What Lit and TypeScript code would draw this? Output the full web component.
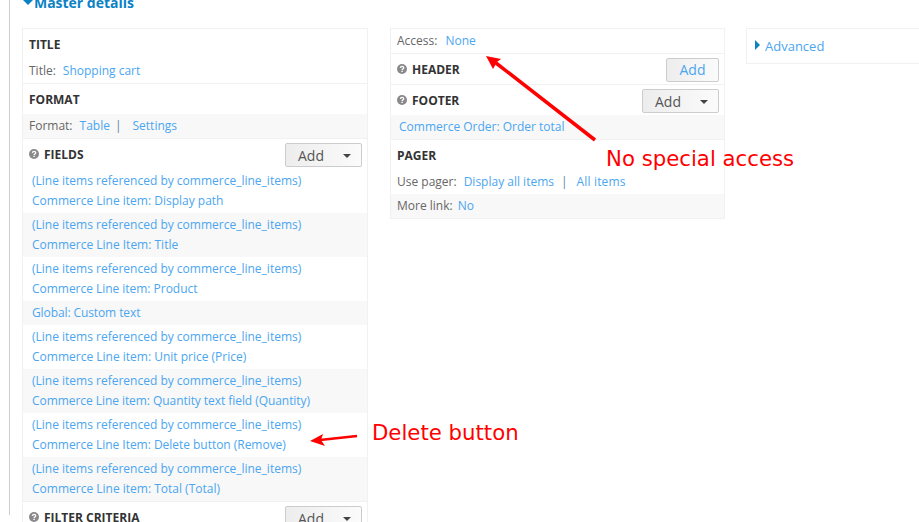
import { LitElement, html, css, svg } from "lit";
import { customElement } from "lit/decorators.js";

const help = html`<svg class="help" viewBox="0 0 10 10" width="10" height="10"><circle cx="5" cy="5" r="5" fill="#8a8a8a"/><path d="M3.4 3.9C3.500 2.900 4.100 2.400 5.100 2.400C6.100 2.400 6.700 2.900 6.700 3.700C6.700 4.900 5.100 4.900 5.100 6" fill="none" stroke="#fff" stroke-width="1.300"/><rect x="4.400" y="6.700" width="1.400" height="1.300" fill="#fff"/></svg>`;
const addDrop = html`<span class="btn drop">Add<i class="caret"></i></span>`;

const L = "(Line items referenced by commerce_line_items)";
/* last value: per-line tracking, to follow the reference's rendered text widths */
const fields: [string | null, string, number][] = [
  [L, "Commerce Line item: Display path", 0],
  [L, "Commerce Line Item: Title", 0],
  [L, "Commerce Line item: Product", -0.03],
  [null, "Global: Custom text", -0.1],
  [L, "Commerce Line item: Unit price (Price)", 0],
  [L, "Commerce Line item: Quantity text field (Quantity)", -0.06],
  [L, "Commerce Line Item: Delete button (Remove)", -0.03],
  [L, "Commerce Line item: Total (Total)", 0],
];

@customElement("app-root")
export class AppRoot extends LitElement {
  static styles = css`
    :host { display: block; position: relative; width: 919px; height: 522px; overflow: hidden; background: #fff;
      font-family: "Open Sans", sans-serif; font-size: 12px; color: #666; }
    .page { margin-left: 9px; border-left: 1px solid #ccc; height: 522px; padding-left: 12px; }
    .legend { height: 28px; margin-top: -7px; padding-left: 1px; display: flex; align-items: flex-start;
      font-size: 14px; font-weight: 700; color: #0a82c4; line-height: 19px; letter-spacing: -0.02px; }
    .legend-arrow { width: 0; height: 0; border-left: 5px solid transparent; border-right: 5px solid transparent; border-top: 5px solid #0a82c4; margin: 7px 1px 0 0; }
    .cols { display: flex; align-items: flex-start; margin-top: 7px; }
    .col { border: 1px solid #f1f1f1; box-sizing: border-box; }
    .c1 { width: 346px; flex: none; }
    .c2 { width: 335px; flex: none; margin-left: 22px; }
    .c3 { flex: 1; margin-left: 21px; height: 36px; border-right: 0; display: flex; align-items: center; padding-left: 8px; gap: 5px; color: #4ba6f0; font-size: 13px; }
    .right-arrow { width: 0; height: 0; border-top: 5px solid transparent; border-bottom: 5px solid transparent; border-left: 5px solid #0a82c4; margin-top: -2px; }
    a { color: #4ba6f0; text-decoration: none; }
    .head { display: flex; align-items: center; font-weight: 700; color: #333; padding: 0 5px 0 6px; height: 30px; }
    .help { margin-right: 5px; flex: none; }
    .spacer { flex: 1; }
    .row { padding: 0 6px; line-height: 24px; height: 24px; white-space: nowrap; }
    .line { border-bottom: 1px solid #f1f1f1; }
    .top { border-top: 1px solid #f1f1f1; }
    .alt { background: #f8f8f8; }
    .gap { margin-left: 7px; }
    .gap-wide { margin-left: 8px; }
    .gap-narrow { margin-left: 5px; }
    .gap2 { margin-left: 11px; }
    .gap2-narrow { margin-left: 9px; letter-spacing: 0.15px; }
    .sep { margin-left: 5px; color: #5a7fa8; }
    .sep-wide { margin-left: 7px; }
    .inset { padding-left: 8px; }
    .field { padding: 2px 9px; line-height: 20px; white-space: nowrap; }
    .field a { display: block; }
    .btn { box-sizing: border-box; height: 24px; margin-top: 2px; border: 1px solid #ccc; border-radius: 2px; display: inline-flex; align-items: center;
      font-size: 14px; font-weight: 400; background: linear-gradient(90deg, #eeeded, #fbfbfb); }
    .drop { width: 77px; padding-left: 12px; color: #555; position: relative; }
    .caret { position: absolute; right: 10px; top: 10px; width: 0; height: 0; border-left: 4px solid transparent; border-right: 4px solid transparent; border-top: 4px solid #444; }
    .plain { width: 53px; margin-top: 1px; justify-content: center; color: #4ba6f0; }
    .overlay { position: absolute; left: 0; top: 0; pointer-events: none; }
    .note { position: absolute; color: #f00; font-family: "DejaVu Sans", sans-serif; font-size: 21.25px; line-height: 26px; white-space: nowrap; }
    .note-access { left: 606px; top: 146px; }
    .note-delete { left: 372px; top: 420px; }
  `;

  render() {
    return html`
      <div class="page">
        <div class="legend"><i class="legend-arrow"></i><span>Master details</span></div>
        <div class="cols">
          <div class="col c1">
            <div class="head">TITLE</div>
            <div class="row line">Title:<a class="gap" href="#">Shopping cart</a></div>
            <div class="head">FORMAT</div>
            <div class="row alt line">Format:<a class="gap" href="#">Table</a><span class="sep">|</span><a class="gap2" href="#">Settings</a></div>
            <div class="head">${help}FIELDS<span class="spacer"></span>${addDrop}</div>
            ${fields.map(([a, b, t], i) => html`
              <div class="field ${i % 2 ? "alt" : ""}">
                ${a ? html`<a href="#">${a}</a>` : null}<a href="#" style="letter-spacing:${t}px">${b}</a>
              </div>`)}
            <div class="head top">${help}FILTER CRITERIA<span class="spacer"></span>${addDrop}</div>
          </div>
          <div class="col c2">
            <div class="row line">Access:<a class="gap-wide" href="#">None</a></div>
            <div class="head line">${help}HEADER<span class="spacer"></span><span class="btn plain">Add</span></div>
            <div class="head">${help}FOOTER<span class="spacer"></span>${addDrop}</div>
            <div class="row alt line inset"><a href="#">Commerce Order: Order total</a></div>
            <div class="head">PAGER</div>
            <div class="row">Use pager:<a class="gap" href="#">Display all items</a><span class="sep sep-wide">|</span><a class="gap2-narrow" href="#">All items</a></div>
            <div class="row alt">More link:<a class="gap-narrow" href="#">No</a></div>
          </div>
          <div class="col c3"><i class="right-arrow"></i><span>Advanced</span></div>
        </div>
      </div>
      <svg class="overlay" width="919" height="522" viewBox="0 0 919 522">
        ${svg`<path d="M595 140L496 63" stroke="#f00" stroke-width="3.500" fill="none"/>
        <path d="M486 56L501 59L497 62L493 69Z" fill="#f00"/>
        <path d="M357 436L320 440" stroke="#f00" stroke-width="2.500" fill="none"/>
        <path d="M310 441L323 434L321 440L325 446Z" fill="#f00"/>`}
      </svg>
      <span class="note note-access">No special access</span>
      <span class="note note-delete">Delete button</span>
    `;
  }
}
